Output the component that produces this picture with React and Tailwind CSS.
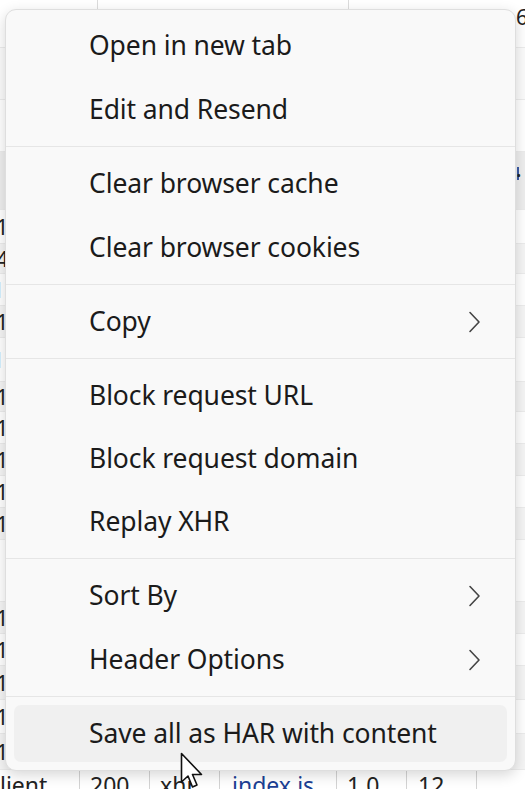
import { useState } from 'react';

const groups = [
  { gap: 'gap-[7px] pt-[7px] pb-[8px]', items: [{ label: 'Open in new tab' }, { label: 'Edit and Resend' }] },
  { gap: 'gap-[7px] py-[8px]', items: [{ label: 'Clear browser cache' }, { label: 'Clear browser cookies' }] },
  { gap: 'gap-[7px] py-[8px]', items: [{ label: 'Copy', sub: true }] },
  {
    gap: 'gap-[6px] py-[8px]',
    items: [{ label: 'Block request URL' }, { label: 'Block request domain' }, { label: 'Replay XHR' }],
  },
  { gap: 'gap-[7px] py-[8px]', items: [{ label: 'Sort By', sub: true }, { label: 'Header Options', sub: true }] },
  { gap: 'gap-[7px] py-[8px]', items: [{ label: 'Save all as HAR with content' }] },
];

const bgRows = [
  { h: 'h-[48px]', bg: 'bg-white', left: '', right: '6' },
  { h: 'h-[52px]', bg: 'bg-[#fbfbfb]', left: '', right: '' },
  { h: 'h-[52px]', bg: 'bg-white', left: '', right: '' },
  { h: 'h-[58px]', bg: 'bg-[#eeeeee]', left: '', right: '.', blue: true },
  { h: 'h-[34px]', bg: 'bg-white', left: '1', right: '' },
  { h: 'h-[30px]', bg: 'bg-[#f5f5f5]', left: '4', right: '' },
  { h: 'h-[32px]', bg: 'bg-white', left: 'l', right: '' },
  { h: 'h-[32px]', bg: 'bg-[#f5f5f5]', left: '1', right: '' },
  { h: 'h-[44px]', bg: 'bg-white', left: 'l', right: '' },
  { h: 'h-[30px]', bg: 'bg-[#f5f5f5]', left: '1', right: '' },
  { h: 'h-[32px]', bg: 'bg-white', left: '1', right: '' },
  { h: 'h-[32px]', bg: 'bg-[#f5f5f5]', left: '1', right: '' },
  { h: 'h-[32px]', bg: 'bg-white', left: '1', right: '' },
  { h: 'h-[32px]', bg: 'bg-[#f5f5f5]', left: '1', right: '' },
  { h: 'h-[62px]', bg: 'bg-white', left: '', right: '' },
  { h: 'h-[32px]', bg: 'bg-[#f5f5f5]', left: '1', right: '' },
  { h: 'h-[32px]', bg: 'bg-white', left: '1', right: '' },
  { h: 'h-[34px]', bg: 'bg-[#f5f5f5]', left: '1', right: '' },
  { h: 'h-[34px]', bg: 'bg-white', left: '1', right: '' },
  { h: 'h-[36px]', bg: 'bg-[#f5f5f5]', left: '1', right: '' },
];

function Chevron() {
  return (
    <svg width="13" height="22" viewBox="0 0 13 22" fill="none">
      <path d="M2 1.5 L11 11 L2 20.5" stroke="#454545" strokeWidth="1.6" strokeLinejoin="round" strokeLinecap="round" />
    </svg>
  );
}

function Cursor() {
  return (
    <svg width="28" height="40" viewBox="0 0 28 40">
      <path
        d="M1.5 1.5 L1.5 30 L8 24 L12.5 35 L17 33 L12.5 22.5 L21.5 22.5 Z"
        fill="#ffffff"
        stroke="#111111"
        strokeWidth="1.6"
        strokeLinejoin="round"
      />
    </svg>
  );
}

export default function App() {
  const [hovered, setHovered] = useState('Save all as HAR with content');

  return (
    <div
      className="relative w-[525px] h-[789px] overflow-hidden bg-white text-[#1b1b1b]"
      style={{ fontFamily: '"Noto Sans", "Open Sans", sans-serif' }}
    >
      {/* background network table */}
      <div className="flex flex-col">
        {bgRows.map((r, i) => (
          <div key={i} className={`relative flex items-center ${r.h} ${r.bg} border-b border-[#ececec]`}>
            <span className="absolute left-[-4px] text-[22px] text-[#222]">{r.left}</span>
            {i === 0 && (
              <>
                <div className="absolute left-[97px] top-0 h-full w-px bg-[#dcdcdc]" />
                <div className="absolute left-[348px] top-0 h-full w-px bg-[#dcdcdc]" />
              </>
            )}
            {r.blue && <div className="absolute left-[517px] top-[15px] h-[13px] w-[2px] bg-[#3b5ba5]" />}
            <span className="absolute left-[516px] top-[2px] text-[21px] text-[#222]">{r.right}</span>
          </div>
        ))}
        <div className="flex h-[40px] items-start bg-white text-[23px] leading-[30px] text-[#222]">
          <div className="h-full w-[80px] border-r border-[#d4d4d4]">lient</div>
          <div className="h-full w-[70px] border-r border-[#d4d4d4] pl-[10px]">200</div>
          <div className="h-full w-[70px] border-r border-[#d4d4d4] pl-[10px]">xhr</div>
          <div className="h-full w-[117px] border-r border-[#d4d4d4] pl-[12px] text-[#1c3f94]">index.js</div>
          <div className="h-full w-[70px] border-r border-[#d4d4d4] pl-[10px]">1.0</div>
          <div className="h-full w-[70px] border-r border-[#d4d4d4] pl-[11px]">12</div>
        </div>
      </div>

      {/* context menu */}
      <div className="absolute left-[5px] top-[9px] w-[511px] rounded-[11px] border border-[#dedede] bg-[#f9f9f9] shadow-[0_4px_14px_rgba(0,0,0,0.16)]">
        {groups.map((g, gi) => (
          <div key={gi} className={`flex flex-col ${g.gap} ${gi > 0 ? 'border-t border-[#e6e6e6]' : ''}`}>
            {g.items.map((item) => (
              <div
                key={item.label}
                onMouseEnter={() => setHovered(item.label)}
                className={`mx-[8px] flex h-[57px] items-center justify-between rounded-[7px] pl-[75px] pr-[26px] text-[26.5px] ${
                  hovered === item.label ? 'bg-[#f0f0f0]' : ''
                }`}
              >
                <span className="tracking-[-0.1px]">{item.label}</span>
                {item.sub && <Chevron />}
              </div>
            ))}
          </div>
        ))}
      </div>

      {/* mouse pointer */}
      <div className="absolute left-[180px] top-[752px]">
        <Cursor />
      </div>
    </div>
  );
}
